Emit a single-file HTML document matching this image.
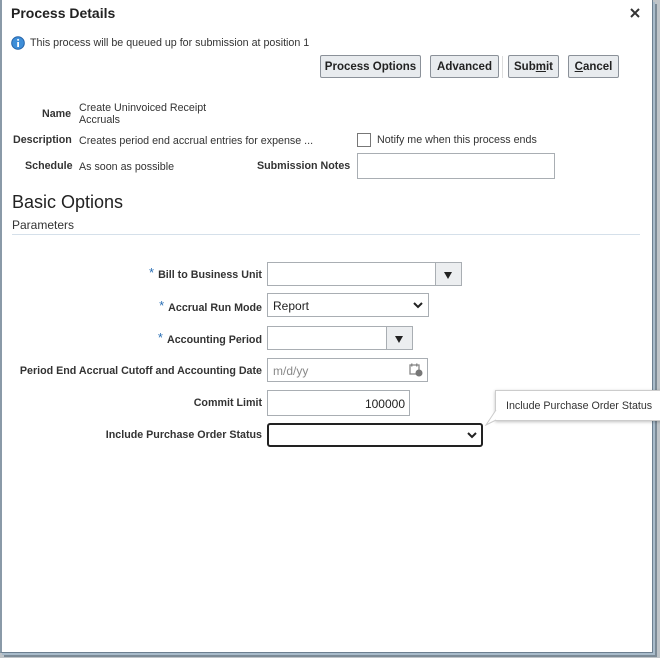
<!DOCTYPE html><html><head><style>
body{margin:0;width:660px;height:658px;background:#bfc4c8;position:relative;overflow:hidden;font-family:"Liberation Sans",Arial,sans-serif;font-size:11px;color:#333}
.dlg{position:absolute;left:0;top:0;width:650px;height:652px;background:#fff;border-left:2px solid #8a9aa8;border-right:1px solid #6c7f90;border-bottom:1px solid #6c7f90;box-shadow:2px 2px 0 #a9bccb,4px 4px 0 #7b8a96}
.a{position:absolute;white-space:nowrap}
.btn{position:absolute;top:55px;height:23px;border:1px solid #8b9199;border-radius:2px;background:#e8ebee;font-weight:bold;font-size:11.5px;color:#222;text-align:center;line-height:23px;box-sizing:border-box}
.inp{position:absolute;border:1px solid #a9aeb3;background:#fff;box-sizing:border-box}
.lbl{position:absolute;right:390px;font-weight:bold;font-size:10.7px;color:#333;white-space:nowrap}
.lbl b{color:#2a6fb5;font-weight:normal;margin-right:4px;font-size:13px;position:relative;top:-1px}
.dd{position:absolute;top:0;right:0;width:25px;height:100%;background:#eceef0;border-left:1px solid #a9aeb3}
.dd:after{content:"";position:absolute;left:8px;top:9px;border-left:4.5px solid transparent;border-right:4.5px solid transparent;border-top:7px solid #222}
</style></head><body>
<div class="dlg">
<div class="a" style="left:9px;top:5px;font-size:14px;font-weight:bold;color:#222">Process Details</div>
<svg class="a" style="left:628px;top:8px" width="10" height="10"><path d="M1 1L9 9M9 1L1 9" stroke="#333" stroke-width="2"/></svg>
<svg class="a" style="left:9px;top:36px" width="14" height="14"><circle cx="7" cy="7" r="6.3" fill="#3e8ed8" stroke="#2563a8"/><rect x="6.2" y="6" width="1.8" height="5" fill="#fff"/><circle cx="7.1" cy="3.9" r="1" fill="#fff"/></svg>
<div class="a" style="left:28px;top:37px;font-size:10.7px">This process will be queued up for submission at position 1</div>
<div class="btn" style="left:318px;width:101px">Process Options</div>
<div class="btn" style="left:428px;width:69px">Advanced</div>
<div class="a" style="left:500px;top:56px;width:1px;height:22px;background:#ddd"></div>
<div class="btn" style="left:506px;width:51px">Sub<u>m</u>it</div>
<div class="btn" style="left:566px;width:51px"><u>C</u>ancel</div>
<div class="a" style="left:40px;top:108px;font-weight:bold;font-size:10.7px">Name</div>
<div class="a" style="left:77px;top:102px;line-height:12px;font-size:10.7px">Create Uninvoiced Receipt<br>Accruals</div>
<div class="a" style="left:11px;top:134px;font-weight:bold;font-size:10.7px">Description</div>
<div class="a" style="left:77px;top:135px;font-size:10.7px">Creates period end accrual entries for expense ...</div>
<div class="inp" style="left:355px;top:133px;width:14px;height:14px;border-color:#777"></div>
<div class="a" style="left:375px;top:134px;font-size:10.7px">Notify me when this process ends</div>
<div class="a" style="left:23px;top:160px;font-weight:bold;font-size:10.7px">Schedule</div>
<div class="a" style="left:77px;top:161px;font-size:10.7px">As soon as possible</div>
<div class="a" style="left:255px;top:160px;font-weight:bold;font-size:10.7px">Submission Notes</div>
<div class="inp" style="left:355px;top:153px;width:198px;height:26px"></div>
<div class="a" style="left:10px;top:192px;font-size:18px;color:#222">Basic Options</div>
<div class="a" style="left:10px;top:218px;font-size:12px;color:#333">Parameters</div>
<div class="a" style="left:10px;top:234px;width:628px;height:1px;background:#d5e0ea"></div>
<div class="lbl" style="top:266px"><b>*</b>Bill to Business Unit</div>
<div class="inp" style="left:265px;top:262px;width:195px;height:24px"><div class="dd"></div></div>
<div class="lbl" style="top:299px"><b>*</b>Accrual Run Mode</div>
<div class="inp" style="left:265px;top:293px;width:162px;height:24px"><span class="a" style="left:5px;top:5px;font-size:12px;color:#222">Report</span><svg class="a" style="right:5px;top:8px" width="10" height="7"><path d="M1 1l4 4 4-4" stroke="#222" stroke-width="2" fill="none"/></svg></div>
<div class="lbl" style="top:331px"><b>*</b>Accounting Period</div>
<div class="inp" style="left:265px;top:326px;width:146px;height:24px"><div class="dd"></div></div>
<div class="lbl" style="top:365px">Period End Accrual Cutoff and Accounting Date</div>
<div class="inp" style="left:265px;top:358px;width:161px;height:24px"><span class="a" style="left:5px;top:5px;font-size:12px;color:#888">m/d/yy</span><svg class="a" style="right:4px;top:4px" width="14" height="14"><rect x="1" y="2" width="9" height="9" fill="none" stroke="#888" stroke-width="1.3"/><rect x="2" y="0.5" width="1.5" height="3" fill="#888"/><rect x="7" y="0.5" width="1.5" height="3" fill="#888"/><circle cx="10" cy="10" r="3.5" fill="#777"/></svg></div>
<div class="lbl" style="top:397px">Commit Limit</div>
<div class="inp" style="left:265px;top:390px;width:143px;height:26px"><span class="a" style="right:4px;top:6px;font-size:12px;color:#222">100000</span></div>
<div class="lbl" style="top:429px">Include Purchase Order Status</div>
<div class="inp" style="left:265px;top:423px;width:216px;height:24px;border:2px solid #222;border-radius:3px"><svg class="a" style="right:4px;top:7px" width="10" height="7"><path d="M1 1l4 4 4-4" stroke="#222" stroke-width="2" fill="none"/></svg></div>
<div class="a" style="left:493px;top:390px;width:170px;height:31px;background:#fff;border:1px solid #ccc;box-shadow:0 1px 3px rgba(0,0,0,.25);box-sizing:border-box"><span class="a" style="left:10px;top:9px;font-size:10.7px;color:#333">Include Purchase Order Status</span></div>
<svg class="a" style="left:482px;top:410px" width="14" height="16"><path d="M12 0 L2 15 L12 10" fill="#fff" stroke="#ccc"/><rect x="12.5" y="0" width="2" height="10" fill="#fff"/></svg>
</div>
</body></html>
